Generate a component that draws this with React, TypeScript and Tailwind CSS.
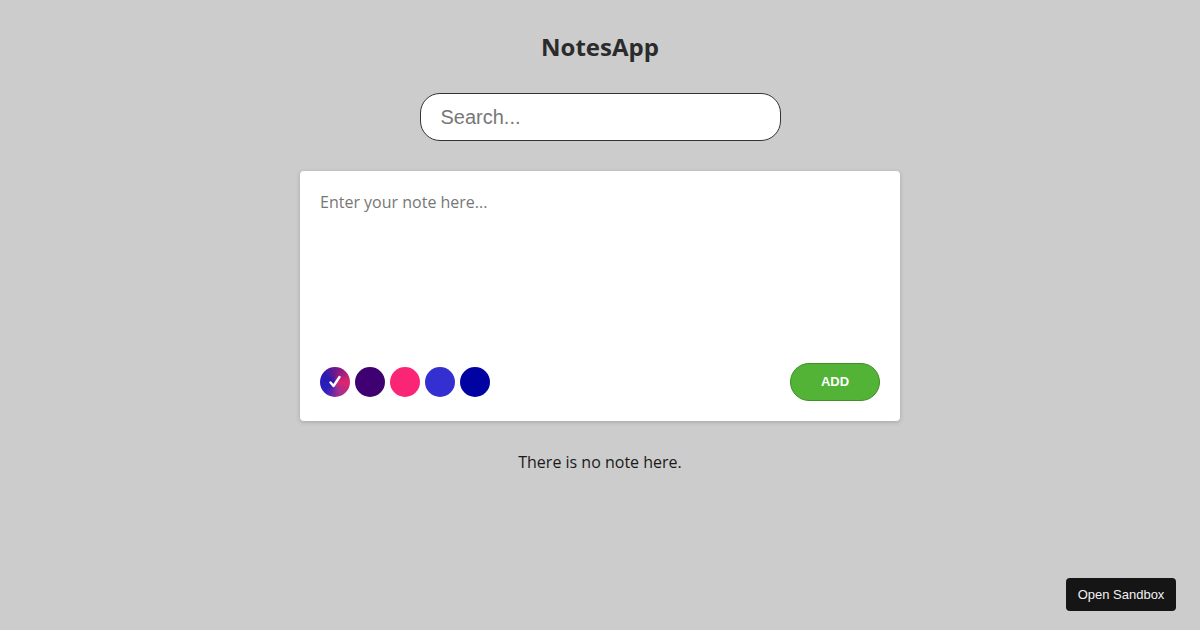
import React from "react";

export default function App() {
  const colors = ["#3f0071", "#fb2576", "#332fd0", "#0002a1"];
  return (
    <div className="min-h-[630px] w-full bg-[#cccccc] relative" style={{ fontFamily: '"Open Sans", sans-serif' }}>
      <div className="flex flex-col items-center pt-[30px]">
        <h1 className="text-[24px] font-bold text-[#2b2b2b] leading-[34px]">NotesApp</h1>
        <input
          className="mt-[29px] w-[361px] h-[48px] rounded-[20px] border border-[#333] bg-white px-[20px] text-[20px] outline-none placeholder:text-[#777]"
          style={{ fontFamily: '"Liberation Sans", Arial, sans-serif' }}
          placeholder="Search..."
        />
        <div className="mt-[30px] w-[600px] h-[250px] bg-white rounded-[4px] shadow-[0_1px_4px_rgba(0,0,0,0.2)] flex flex-col px-[20px] pt-[19px] pb-[20px]">
          <textarea
            className="flex-1 resize-none outline-none text-[16px] text-[#333] placeholder:text-[#777]"
            placeholder="Enter your note here..."
          />
          <div className="flex items-center justify-between">
            <div className="flex gap-[5px]">
              <div className="w-[30px] h-[30px] rounded-full bg-[conic-gradient(from_0deg,#6a1a8c,#e0246f_90deg,#a03090_160deg,#2a1fc0_230deg,#2a1ab0_300deg,#6a1a8c)] flex items-center justify-center">
                <svg width="14" height="14" viewBox="0 0 14 14">
                  <path d="M2.5 7.5 L5.5 11 L11.5 2" fill="none" stroke="white" strokeWidth="2.4" strokeLinecap="round" strokeLinejoin="round" />
                </svg>
              </div>
              {colors.map((c) => (
                <div key={c} className="w-[30px] h-[30px] rounded-full" style={{ backgroundColor: c }} />
              ))}
            </div>
            <button
              className="w-[90px] h-[38px] rounded-full bg-[#52b336] border border-[#3e8f28] text-white text-[13px] font-bold"
              style={{ fontFamily: '"Liberation Sans", Arial, sans-serif' }}
            >
              ADD
            </button>
          </div>
        </div>
        <p className="mt-[29px] text-[16px] text-[#1a1a1a]">There is no note here.</p>
      </div>
      <button
        className="absolute right-[24px] bottom-[19px] w-[110px] h-[33px] rounded-[4px] bg-[#151515] text-[#f2f2f2] text-[13px]"
        style={{ fontFamily: '"Liberation Sans", Arial, sans-serif' }}
      >
        Open Sandbox
      </button>
    </div>
  );
}
